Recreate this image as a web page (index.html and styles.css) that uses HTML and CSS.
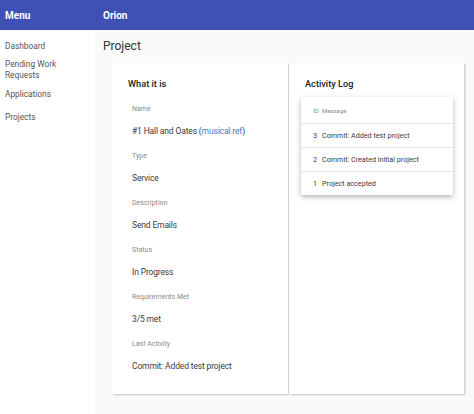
FILE: index.html
```html
<!DOCTYPE html>
<html>
<head>
<meta charset="utf-8">
<link rel="stylesheet" href="styles.css">
</head>
<body>
<div class="app">
  <header class="topbar">
    <div class="brand">Menu</div>
    <div class="apptitle">Orion</div>
  </header>
  <div class="body">
    <nav class="sidebar">
      <div class="nav-item dash">Dashboard</div>
      <div class="nav-item pending">Pending Work Requests</div>
      <div class="nav-item apps">Applications</div>
      <div class="nav-item projects">Projects</div>
    </nav>
    <main class="main">
      <h1 class="page-title">Project</h1>
      <div class="cards">
        <section class="card info">
          <h2 class="card-title">What it is</h2>
          <div class="field">
            <div class="label">Name</div>
            <div class="value">#1 Hall and Oates (<a class="link">musical ref</a>)</div>
          </div>
          <div class="field">
            <div class="label">Type</div>
            <div class="value">Service</div>
          </div>
          <div class="field">
            <div class="label">Description</div>
            <div class="value">Send Emails</div>
          </div>
          <div class="field">
            <div class="label">Status</div>
            <div class="value">In Progress</div>
          </div>
          <div class="field">
            <div class="label">Requirements Met</div>
            <div class="value">3/5 met</div>
          </div>
          <div class="field">
            <div class="label">Last Activity</div>
            <div class="value">Commit: Added test project</div>
          </div>
        </section>
        <section class="card log">
          <h2 class="card-title">Activity Log</h2>
          <div class="table">
            <div class="row head"><span class="id">ID</span><span class="msg">Message</span></div>
            <div class="row"><span class="id">3</span><span class="msg">Commit: Added test project</span></div>
            <div class="row"><span class="id">2</span><span class="msg">Commit: Created initial project</span></div>
            <div class="row"><span class="id">1</span><span class="msg">Project accepted</span></div>
          </div>
        </section>
      </div>
    </main>
  </div>
</div>
</body>
</html>
```
FILE: styles.css
```css
* { box-sizing: border-box; }
html, body { margin: 0; padding: 0; }
body {
  font-family: Roboto, "Liberation Sans", sans-serif;
  width: 474px;
  height: 414px;
  overflow: hidden;
  background: #fafafa;
}
.app { display: flex; flex-direction: column; height: 414px; }
.topbar {
  height: 30px;
  background: #3f51b5;
  color: #fff;
  display: flex;
  align-items: center;
  font-weight: 700;
  font-size: 10px;
  flex: none;
}
.brand { width: 98px; padding-left: 5px; }
.apptitle { padding-left: 5px; }
.body { display: flex; flex: 1; }
.sidebar {
  width: 95px;
  background: #fff;
  padding-top: 10px;
  flex: none;
  font-size: 8.3px;
  color: #555;
}
.nav-item { padding: 1px 8px 0 5px; line-height: 11px; }
.nav-item.dash { margin-bottom: 6px; }
.nav-item.pending { margin-bottom: 7px; }
.nav-item.projects { margin-top: 11px; }
.main { flex: 1; padding: 10px 10px 0 8px; }
.page-title {
  margin: 0;
  font-size: 12px;
  font-weight: 400;
  color: #333;
  line-height: 12px;
}
.cards { display: flex; gap: 1px; margin-top: 11px; margin-left: 9px; }
.card {
  background: #fff;
  height: 331px;
  box-shadow: 1px 1px 2px rgba(0,0,0,0.22);
}
.card.info { width: 176px; padding: 15px 16px; }
.card.log { width: 175px; padding: 15px 11px 0 12px; }
.card-title {
  margin: 0;
  font-size: 9.2px;
  font-weight: 500;
  color: #222;
  line-height: 12px;
}
.log .card-title { padding-left: 4px; }
.field { padding-left: 4px; }
.label { font-size: 7px; color: #8a8a8a; margin-top: 14px; line-height: 10px; }
.value { font-size: 8.5px; letter-spacing: -0.15px; color: #3c3c3c; margin-top: 11px; line-height: 12px; }
.link { color: #3b7dc4; text-decoration: none; }
.table {
  margin-top: 7px;
  background: #fff;
  box-shadow: 0 2px 5px rgba(0,0,0,0.3);
  font-size: 7.2px;
  color: #3c3c3c;
}
.row { display: flex; height: 24px; align-items: center; padding-left: 12px; border-top: 1px solid #e6e6e6; }
.row.head { height: 26px; border-top: none; color: #8a8a8a; font-size: 6px; }
.id { width: 9px; }
```
